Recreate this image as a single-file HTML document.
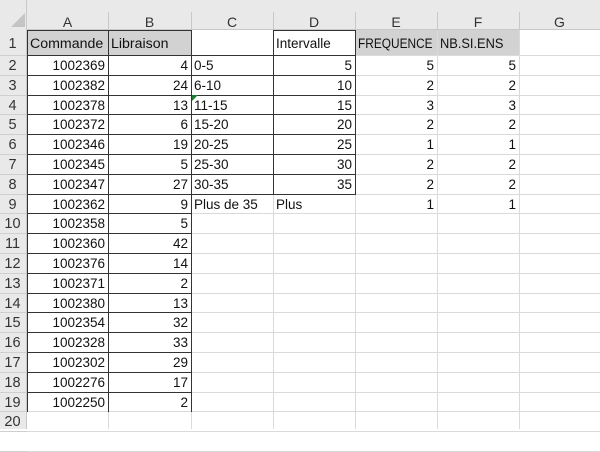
<!DOCTYPE html>
<html><head><meta charset="utf-8"><style>
body{margin:0;width:600px;height:429px;overflow:hidden;background:#fff;font-family:"Liberation Sans",Arial,sans-serif;font-size:13.5px;color:#111;position:relative}
.a{position:absolute;box-sizing:border-box}
.hb{background:#e9e9e9}
.t{position:absolute;line-height:20px;white-space:nowrap}
</style></head><body>
<div class="a hb" style="left:0;top:0;width:600px;height:30px;border-bottom:1px solid #c8c8c8"></div>
<div class="a hb" style="left:0;top:0;width:27px;height:429px;border-right:1px solid #c8c8c8"></div>
<div class="a" style="left:11px;top:13px;width:0;height:0;border-left:14px solid transparent;border-bottom:14px solid #c4c4c4"></div>
<div class="a" style="left:27px;top:30px;width:164px;height:25px;background:#d2d2d2"></div>
<div class="a" style="left:355px;top:30px;width:164px;height:25px;background:#d2d2d2"></div>
<div id="g"></div>
<script>
var g=document.getElementById('g'),h='';
var xs=[27,108,191,273,355,437,519,600],cols='ABCDEFG';
function rowTop(r){return r==1?30:55+(r-2)*19.8;}
for(var i=0;i<7;i++){h+='<div class="t" style="left:'+xs[i]+'px;width:'+(xs[i+1]-xs[i])+'px;top:12px;text-align:center;color:#333;font-size:14px">'+cols[i]+'</div>';
 h+='<div class="a" style="left:'+xs[i+1]+'px;top:30px;width:1px;height:399px;background:#dadada"></div>';
 h+='<div class="a" style="left:'+xs[i+1]+'px;top:12px;width:1px;height:18px;background:#c8c8c8"></div>';}
for(var r=1;r<=21;r++){var y=rowTop(r),hh=r==1?25:19.8;
 h+='<div class="a" style="left:27px;top:'+(y+hh)+'px;width:573px;height:1px;background:#dadada"></div>';
 h+='<div class="a" style="left:0;top:'+(y+hh)+'px;width:27px;height:1px;background:#cfcfcf"></div>';
 if(r<=20)h+='<div class="t" style="left:0;width:25px;text-align:center;color:#333;font-size:14.5px;top:'+(y+(hh-20)/2+1)+'px">'+r+'</div>';}
function H(x1,x2,y){h+='<div class="a" style="left:'+x1+'px;top:'+y+'px;width:'+(x2-x1+1)+'px;height:1px;background:#333"></div>';}
function V(x,y1,y2){h+='<div class="a" style="left:'+x+'px;top:'+y1+'px;width:1px;height:'+(y2-y1)+'px;background:#333"></div>';}
H(27,191,30);H(273,355,30);
for(var k=0;k<=17;k++){var y=55+k*19.8;H(27,k<=7?355:191,Math.round(y));}
V(27,30,412);V(108,30,412);V(191,30,412);V(273,30,194);V(355,30,194);
function T(c,r,s,right,sx){var y=rowTop(r),hh=r==1?25:19.8;var x=xs[c];
 var st=sx?';transform:scaleX('+sx+');transform-origin:left center':'';
 h+='<div class="t" style="top:'+(y+(hh-20)/2+1)+'px;'+(right?'left:'+x+'px;width:'+(xs[c+1]-x-3)+'px;text-align:right':'left:'+(x+3)+'px')+st+'">'+s+'</div>';}
T(0,1,'Commande',0,1.05);T(1,1,'Libraison',0,1.05);T(3,1,'Intervalle');T(4,1,'FREQUENCE',0,0.88);T(5,1,'NB.SI.ENS',0,0.95);
var A=[1002369,1002382,1002378,1002372,1002346,1002345,1002347,1002362,1002358,1002360,1002376,1002371,1002380,1002354,1002328,1002302,1002276,1002250];
var B=[4,24,13,6,19,5,27,9,5,42,14,2,13,32,33,29,17,2];
for(var i=0;i<18;i++){T(0,i+2,A[i],1);T(1,i+2,B[i],1);}
var C=['0-5','6-10','11-15','15-20','20-25','25-30','30-35','Plus de 35'];
var D=[5,10,15,20,25,30,35],E=[5,2,3,2,1,2,2,1],F=[5,2,3,2,1,2,2,1];
for(var i=0;i<8;i++){T(2,i+2,C[i]);if(i<7)T(3,i+2,D[i],1);T(4,i+2,E[i],1);T(5,i+2,F[i],1);}
T(3,9,'Plus');
h+='<div class="a" style="left:192px;top:95px;width:0;height:0;border-top:6px solid #1e7d32;border-right:6px solid transparent"></div>';
g.innerHTML=h;
</script>
</body></html>
